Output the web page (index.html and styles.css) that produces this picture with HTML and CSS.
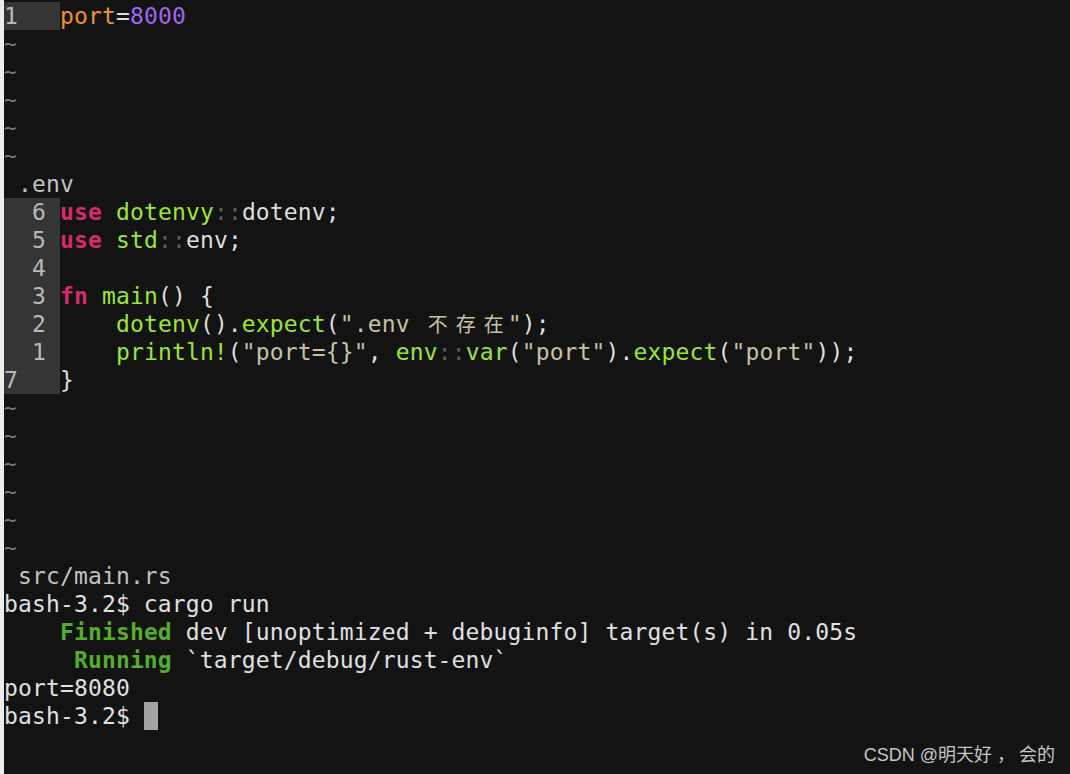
FILE: index.html
```html
<!DOCTYPE html>
<html lang="zh">
<head>
<meta charset="utf-8">
<title>vim - rust-env</title>
<link rel="stylesheet" href="styles.css">
</head>
<body>
<div class="screen">
  <div class="line"><span class="gutter">1   </span><span class="c-orange">port</span><span class="c-white">=</span><span class="c-purple">8000</span></div>
  <div class="line tilde">~</div>
  <div class="line tilde">~</div>
  <div class="line tilde">~</div>
  <div class="line tilde">~</div>
  <div class="line tilde">~</div>
  <div class="line status"> .env</div>
  <div class="line"><span class="gutter">  6 </span><span class="c-kw">use</span> <span class="c-green">dotenvy</span><span class="c-dim">::</span><span class="c-white">dotenv;</span></div>
  <div class="line"><span class="gutter">  5 </span><span class="c-kw">use</span> <span class="c-green">std</span><span class="c-dim">::</span><span class="c-white">env;</span></div>
  <div class="line"><span class="gutter">  4 </span></div>
  <div class="line"><span class="gutter">  3 </span><span class="c-kw">fn</span> <span class="c-green">main</span><span class="c-white">() {</span></div>
  <div class="line"><span class="gutter">  2 </span>    <span class="c-green">dotenv</span><span class="c-white">().</span><span class="c-green">expect</span><span class="c-white">(</span><span class="c-str">".env <span class="cjk">不</span><span class="cjk">存</span><span class="cjk">在</span>"</span><span class="c-white">);</span></div>
  <div class="line"><span class="gutter">  1 </span>    <span class="c-green">println!</span><span class="c-white">(</span><span class="c-str">"port={}"</span><span class="c-white">, </span><span class="c-green">env</span><span class="c-dim">::</span><span class="c-green">var</span><span class="c-white">(</span><span class="c-str">"port"</span><span class="c-white">).</span><span class="c-green">expect</span><span class="c-white">(</span><span class="c-str">"port"</span><span class="c-white">));</span></div>
  <div class="line"><span class="gutter">7   </span><span class="c-white">}</span></div>
  <div class="line tilde">~</div>
  <div class="line tilde">~</div>
  <div class="line tilde">~</div>
  <div class="line tilde">~</div>
  <div class="line tilde">~</div>
  <div class="line tilde">~</div>
  <div class="line status"> src/main.rs</div>
  <div class="line term">bash-3.2$ cargo run</div>
  <div class="line term">    <span class="t-green">Finished</span> dev [unoptimized + debuginfo] target(s) in 0.05s</div>
  <div class="line term">     <span class="t-green">Running</span> `target/debug/rust-env`</div>
  <div class="line term">port=8080</div>
  <div class="line term">bash-3.2$ <span class="cursor"> </span></div>
</div>
<div class="watermark">CSDN @明天好<span class="comma">，</span>会的</div>
</body>
</html>
```

FILE: styles.css
```css
html, body {
  margin: 0;
  padding: 0;
  background: #131313;
  height: 100%;
  overflow: hidden;
}

body {
  border-left: 4px solid #ededed;
  box-sizing: border-box;
  position: relative;
}

.screen {
  padding-top: 2px;
  font-family: "DejaVu Sans Mono", "Liberation Mono", "Noto Sans CJK SC", monospace;
  font-size: 23px;
  letter-spacing: 0.14px;
  color: #dcdcdc;
}

.line {
  height: 28px;
  line-height: 28px;
  white-space: pre;
}

.gutter {
  display: inline-block;
  width: 56px;
  background: #353535;
  color: #b8b8b8;
  height: 28px;
  vertical-align: top;
}

.tilde {
  color: #7c7c7c;
  font-size: 21px;
}

.status {
  color: #c2c2c2;
}

.c-orange { color: #f0922e; }
.c-purple { color: #a165f2; }
.c-white  { color: #dedede; }
.c-kw     { color: #d52a6b; font-weight: bold; }
.c-green  { color: #9be53a; }
.c-dim    { color: #5e5e5e; }
.c-str    { color: #c8c1a2; }

.cjk {
  display: inline-block;
  width: 28px;
  text-align: center;
  font-family: "Noto Sans CJK SC", sans-serif;
  font-size: 20px;
  letter-spacing: 0;
  vertical-align: top;
}

.term {
  color: #e0e0e0;
}

.t-green {
  color: #56ac2c;
  font-weight: bold;
}

.cursor {
  display: inline-block;
  width: 14px;
  height: 28px;
  background: #a3a3a3;
  vertical-align: top;
}

.watermark {
  position: absolute;
  right: 15px;
  bottom: 8px;
  font-family: "Liberation Sans", "Noto Sans CJK SC", sans-serif;
  font-size: 18px;
  color: #c6c6c6;
}

.comma {
  margin: 0 4px 0 5px;
}
```
